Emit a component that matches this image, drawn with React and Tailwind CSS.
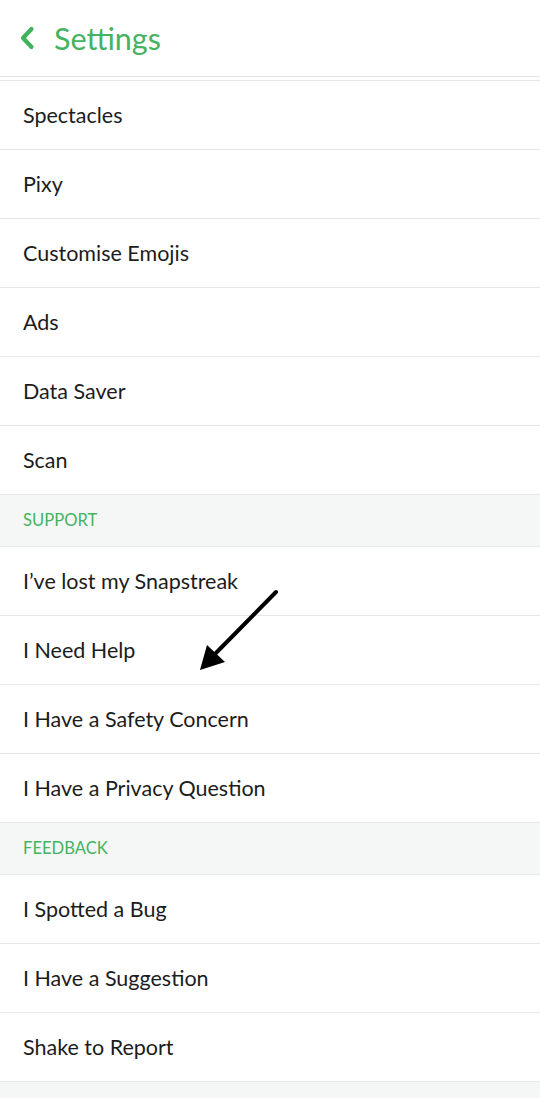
import React from "react";

const font = { fontFamily: "Lato, 'Open Sans', sans-serif" };

function Row({ label }) {
  return (
    <div className="flex h-[69px] items-center border-b border-[#e6e8e8] bg-white pl-[23px] text-[21.5px] text-[#1c1c1c]">
      {label}
    </div>
  );
}

function Section({ label }) {
  return (
    <div className="flex h-[52px] items-center border-b border-[#e6e8e8] bg-[#f5f7f7] pl-[23px] text-[16.6px] text-[#45b35f]">
      {label}
    </div>
  );
}

export default function App() {
  return (
    <div className="relative min-h-[1098px] w-[540px] bg-[#f5f7f7]" style={font}>
      <div className="flex h-[77px] items-center border-b border-[#e3e5e5] bg-white pl-[19px]">
        <svg width="16" height="24" viewBox="0 0 16 24" className="mr-[19px]">
          <path d="M12.5 3 L4 12 L12.5 21" fill="none" stroke="#3fb35c" strokeWidth="4.2" strokeLinecap="round" strokeLinejoin="round" />
        </svg>
        <span className="text-[30.5px] leading-none text-[#45b35f]">Settings</span>
      </div>
      <div className="h-[4px] border-b border-[#e6e8e8] bg-white" />
      <Row label="Spectacles" />
      <Row label="Pixy" />
      <Row label="Customise Emojis" />
      <Row label="Ads" />
      <Row label="Data Saver" />
      <Row label="Scan" />
      <Section label="SUPPORT" />
      <Row label="I’ve lost my Snapstreak" />
      <Row label="I Need Help" />
      <Row label="I Have a Safety Concern" />
      <Row label="I Have a Privacy Question" />
      <Section label="FEEDBACK" />
      <Row label="I Spotted a Bug" />
      <Row label="I Have a Suggestion" />
      <Row label="Shake to Report" />
      <svg className="absolute left-[195px] top-[588px]" width="90" height="88" viewBox="0 0 90 88">
        <line x1="81" y1="4" x2="18" y2="68" stroke="#000" strokeWidth="4" strokeLinecap="round" />
        <polygon points="5,82 12,57 30,74" fill="#000" />
      </svg>
    </div>
  );
}
